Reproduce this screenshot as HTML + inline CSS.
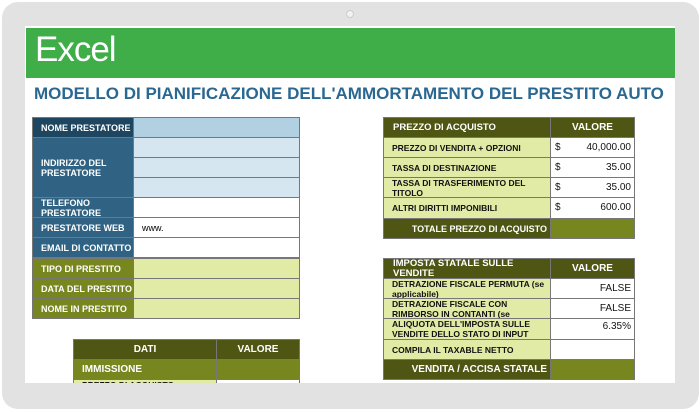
<!DOCTYPE html>
<html><head><style>
*{margin:0;padding:0;box-sizing:border-box}
body{width:700px;height:412px;background:#fff;position:relative;overflow:hidden;font-family:"Liberation Sans",Arial,sans-serif}
.frame{position:absolute;left:2px;top:2px;width:697px;height:407px;background:#e2e2e2;border-radius:16px}
.screen{position:absolute;left:25px;top:26px;width:650px;height:357px;background:#fff;overflow:hidden}
.cam{position:absolute;left:346px;top:10px;width:8px;height:8px;border-radius:50%;background:#f2f2f2;border:1px solid #ccc}
.hdr{position:absolute;left:1px;top:2px;width:649px;height:50px;background:#3fae49;color:#fff;font-size:35px;padding-left:9px;line-height:44px;letter-spacing:-1px}
.title{position:absolute;left:9px;top:58px;font-size:17px;font-weight:bold;color:#2a6891;white-space:nowrap}
.c{position:absolute;font-size:9px;font-weight:bold;border:1px solid #777;display:flex;align-items:center;line-height:10px;overflow:hidden}
.lb{background:#2f6283;color:#fff;padding-left:8px}
.ld{background:#1f4660;color:#fff;padding-left:8px}
.v1{background:#b1d0e1}.v2{background:#d5e6f0}.w{background:#fff}
.lo{background:#78861f;color:#fff;padding-left:8px}
.vl{background:#e2eba5}
.do{background:#4f5614;color:#fff;justify-content:center;font-size:10px}
.lt{background:#e2eba5;color:#111;padding-left:8px;font-size:8.5px}
.n{background:#fff;color:#111;justify-content:flex-end;padding-right:3px;font-weight:normal;font-size:10px}
</style></head><body>
<div class="frame"></div>
<div class="cam"></div>
<div class="screen">
<div class="hdr">Excel</div>
<div class="title">MODELLO DI PIANIFICAZIONE DELL'AMMORTAMENTO DEL PRESTITO AUTO</div>
</div>
<div style="position:absolute;left:0;top:0;width:700px;height:383px;overflow:hidden">
<div class="c ld" style="left:32px;top:117px;width:102px;height:21px">NOME PRESTATORE</div>
<div class="c v1" style="left:133px;top:117px;width:167px;height:21px"></div>
<div class="c lb" style="left:32px;top:137px;width:102px;height:61px">INDIRIZZO DEL<br>PRESTATORE</div>
<div class="c v2" style="left:133px;top:137px;width:167px;height:21px"></div>
<div class="c v2" style="left:133px;top:157px;width:167px;height:21px"></div>
<div class="c v2" style="left:133px;top:177px;width:167px;height:21px"></div>
<div class="c lb" style="left:32px;top:197px;width:102px;height:21px">TELEFONO<br>PRESTATORE</div>
<div class="c w" style="left:133px;top:197px;width:167px;height:21px"></div>
<div class="c lb" style="left:32px;top:217px;width:102px;height:21px">PRESTATORE WEB</div>
<div class="c w" style="left:133px;top:217px;width:167px;height:21px;padding-left:8px;font-weight:normal">www.</div>
<div class="c lb" style="left:32px;top:237px;width:102px;height:21px">EMAIL DI CONTATTO</div>
<div class="c w" style="left:133px;top:237px;width:167px;height:21px"></div>
<div class="c lo" style="left:32px;top:258px;width:102px;height:21px">TIPO DI PRESTITO</div>
<div class="c vl" style="left:133px;top:258px;width:167px;height:21px"></div>
<div class="c lo" style="left:32px;top:278px;width:102px;height:21px">DATA DEL PRESTITO</div>
<div class="c vl" style="left:133px;top:278px;width:167px;height:21px"></div>
<div class="c lo" style="left:32px;top:298px;width:102px;height:21px">NOME IN PRESTITO</div>
<div class="c vl" style="left:133px;top:298px;width:167px;height:21px"></div>
<div class="c do" style="left:73px;top:339px;width:144px;height:21px">DATI</div>
<div class="c do" style="left:216px;top:339px;width:84px;height:21px">VALORE</div>
<div class="c lo" style="left:73px;top:359px;width:144px;height:21px;font-size:10px">IMMISSIONE</div>
<div class="c lo" style="left:216px;top:359px;width:84px;height:21px"></div>
<div class="c lt" style="left:73px;top:379px;width:144px;height:21px;align-items:flex-start">PREZZO DI ACQUISTO +</div>
<div class="c w" style="left:216px;top:379px;width:84px;height:21px"></div>
<div class="c do" style="left:383px;top:117px;width:168px;height:21px;justify-content:flex-start;padding-left:9px;font-size:9.5px">PREZZO DI ACQUISTO</div>
<div class="c do" style="left:550px;top:117px;width:85px;height:21px">VALORE</div>
<div class="c lt" style="left:383px;top:137px;width:168px;height:21px">PREZZO DI VENDITA + OPZIONI</div>
<div class="c n" style="left:550px;top:137px;width:85px;height:21px"><span style="position:absolute;left:4px">$</span>40,000.00</div>
<div class="c lt" style="left:383px;top:157px;width:168px;height:21px">TASSA DI DESTINAZIONE</div>
<div class="c n" style="left:550px;top:157px;width:85px;height:21px"><span style="position:absolute;left:4px">$</span>35.00</div>
<div class="c lt" style="left:383px;top:177px;width:168px;height:21px">TASSA DI TRASFERIMENTO DEL<br>TITOLO</div>
<div class="c n" style="left:550px;top:177px;width:85px;height:21px"><span style="position:absolute;left:4px">$</span>35.00</div>
<div class="c lt" style="left:383px;top:197px;width:168px;height:22px">ALTRI DIRITTI IMPONIBILI</div>
<div class="c n" style="left:550px;top:197px;width:85px;height:22px"><span style="position:absolute;left:4px">$</span>600.00</div>
<div class="c do" style="left:383px;top:218px;width:168px;height:21px;justify-content:flex-end;padding-right:3px;font-size:9px">TOTALE PREZZO DI ACQUISTO</div>
<div class="c lo" style="left:550px;top:218px;width:85px;height:21px"></div>
<div class="c do" style="left:383px;top:258px;width:168px;height:21px;justify-content:flex-start;padding-left:9px;font-size:9.5px">IMPOSTA STATALE SULLE<br>VENDITE</div>
<div class="c do" style="left:550px;top:258px;width:85px;height:21px">VALORE</div>
<div class="c lt" style="left:383px;top:278px;width:168px;height:21px">DETRAZIONE FISCALE PERMUTA (se<br>applicabile)</div>
<div class="c n" style="left:550px;top:278px;width:85px;height:21px">FALSE</div>
<div class="c lt" style="left:383px;top:298px;width:168px;height:21px">DETRAZIONE FISCALE CON<br>RIMBORSO IN CONTANTI (se</div>
<div class="c n" style="left:550px;top:298px;width:85px;height:21px">FALSE</div>
<div class="c lt" style="left:383px;top:318px;width:168px;height:22px">ALIQUOTA DELL'IMPOSTA SULLE<br>VENDITE DELLO STATO DI INPUT</div>
<div class="c n" style="left:550px;top:318px;width:85px;height:22px;align-items:flex-start;padding-top:3px">6.35%</div>
<div class="c lt" style="left:383px;top:339px;width:168px;height:21px">COMPILA IL TAXABLE NETTO</div>
<div class="c n" style="left:550px;top:339px;width:85px;height:21px"></div>
<div class="c do" style="left:383px;top:359px;width:168px;height:21px;justify-content:flex-end;padding-right:3px">VENDITA / ACCISA STATALE</div>
<div class="c lo" style="left:550px;top:359px;width:85px;height:21px"></div>
</div>
</body></html>
